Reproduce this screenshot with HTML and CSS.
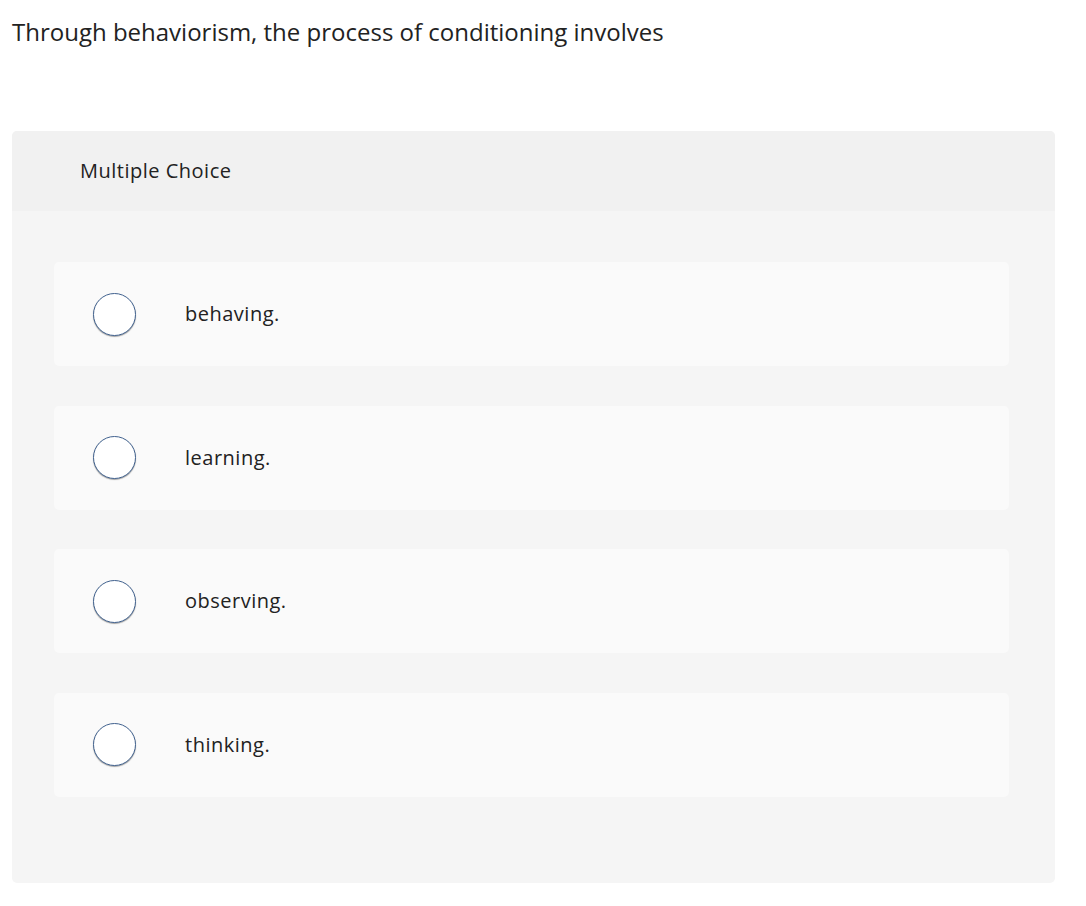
FILE: index.html
```html
<!DOCTYPE html>
<html>
<head>
<meta charset="utf-8">
<link rel="stylesheet" href="styles.css">
</head>
<body>
<div class="page">
  <h1 class="question">Through behaviorism, the process of conditioning involves</h1>
  <div class="card">
    <div class="card-header">Multiple Choice</div>
    <div class="card-body">
      <div class="option"><span class="radio"></span><span class="label">behaving.</span></div>
      <div class="option"><span class="radio"></span><span class="label">learning.</span></div>
      <div class="option"><span class="radio"></span><span class="label">observing.</span></div>
      <div class="option"><span class="radio"></span><span class="label">thinking.</span></div>
    </div>
  </div>
</div>
</body>
</html>
```

FILE: styles.css
```css
html, body {
  margin: 0;
  padding: 0;
  background: #ffffff;
}
body {
  font-family: "Open Sans", Lato, "Liberation Sans", sans-serif;
  color: #222222;
}
.page {
  padding: 0 31px 0 12px;
}
.question {
  margin: 0;
  padding-top: 17px;
  height: 131px;
  box-sizing: border-box;
  font-size: 24px;
  font-weight: 400;
  line-height: 30px;
  color: #222;
}
.card {
  border-radius: 5px;
  overflow: hidden;
  background: #f5f5f5;
}
.card-header {
  height: 80px;
  background: #f1f1f1;
  display: flex;
  align-items: center;
  padding-left: 68px;
  font-size: 20px;
  letter-spacing: 0.5px;
  line-height: 24px;
  color: #222;
}
.card-body {
  padding: 51px 46px 86px 42px;
  display: flex;
  flex-direction: column;
  gap: 39.5px;
}
.option {
  height: 104px;
  background: #fafafa;
  border-radius: 5px;
  display: flex;
  align-items: center;
  padding-left: 39px;
}
.radio {
  width: 41px;
  height: 41px;
  border: 1.5px solid #41628f;
  border-radius: 50%;
  background: #ffffff;
  box-shadow: 0 1px 1px rgba(0,0,0,0.35);
  flex: none;
}
.label {
  margin-left: 49px;
  font-size: 20px;
  letter-spacing: 0.5px;
  line-height: 24px;
  color: #222;
}
```
